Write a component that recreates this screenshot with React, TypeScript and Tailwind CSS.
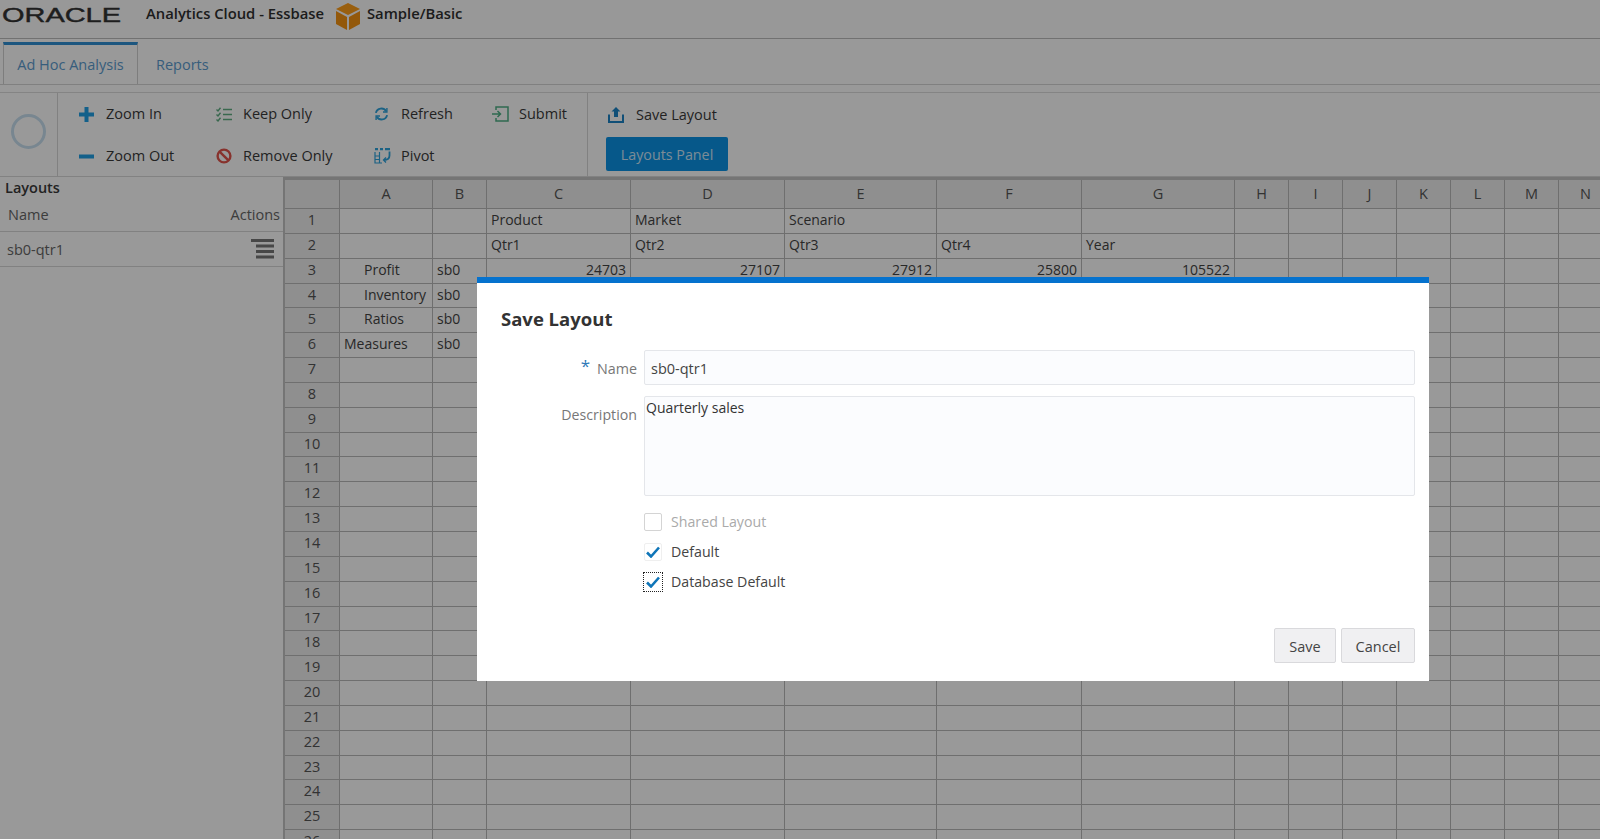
import React from "react";

const F = { fontFamily: '"Open Sans", "Noto Sans", sans-serif' };
const cols = ["A", "B", "C", "D", "E", "F", "G", "H", "I", "J", "K", "L", "M", "N"];
const rows: Record<number, string[]> = {
  1: ["", "", "Product", "Market", "Scenario"],
  2: ["", "", "Qtr1", "Qtr2", "Qtr3", "Qtr4", "Year"],
  3: ["Profit", "sb0", "24703", "27107", "27912", "25800", "105522"],
  4: ["Inventory", "sb0"],
  5: ["Ratios", "sb0"],
  6: ["Measures", "sb0"],
};

function Cube() {
  return (
    <svg width="26" height="27" viewBox="0 0 26 27">
      <polygon points="13,0 25,6 13,12 1,6" fill="#ff9e1a" />
      <polygon points="1,8 12,14 12,27 1,21" fill="#f59312" />
      <polygon points="25,8 14,14 14,27 25,21" fill="#f59312" />
    </svg>
  );
}

function Plus() {
  return (
    <svg width="15" height="15" viewBox="0 0 15 15"><path d="M5.500 0h4v5.500H15v4H9.500V15h-4V9.500H0v-4h5.500z" fill="#21a0e6" /></svg>
  );
}
function Minus() {
  return (
    <svg width="15" height="15" viewBox="0 0 15 15"><rect y="5.500" width="15" height="4" fill="#21a0e6" /></svg>
  );
}
function KeepOnly() {
  return (
    <svg width="16" height="15" viewBox="0 0 16 15" fill="none" stroke="#5fae83" strokeWidth="1.400">
      <path d="M7 2.500h9M7 7.500h9M7 12.500h9" />
      <path d="M.5 2.500l1.500 1.500L4.500.8M.5 7.500L2 9l2.500-3.200M.5 12.500L2 14l2.500-3.200" />
    </svg>
  );
}
function RemoveOnly() {
  return (
    <svg width="16" height="16" viewBox="0 0 16 16" fill="none" stroke="#e2544b" strokeWidth="2.400">
      <circle cx="8" cy="8" r="6.400" />
      <path d="M3.600 3.600l8.800 8.800" />
    </svg>
  );
}
function Refresh() {
  return (
    <svg width="15" height="14" viewBox="0 0 16 15" fill="none" stroke="#2ea3dd" strokeWidth="2">
      <path d="M2 6.300A6 6 0 0 1 13 4.600" />
      <path d="M14 8.700A6 6 0 0 1 3 10.400" />
      <path d="M13.800 1v4.400H9.600M2.200 14V9.600h4.200" strokeWidth="1.500" />
    </svg>
  );
}
function Pivot() {
  return (
    <svg width="17" height="16" viewBox="0 0 17 16" fill="none" stroke="#2ea3dd">
      <path d="M1 1h3M6 1h3M11 1h5" strokeWidth="2.400" />
      <path d="M1 4v11h7M1 8h5M1 11.500h5M5.500 4v11" strokeWidth="1.200" />
      <path d="M15.500 3.500v4c0 3-2 4.500-5.500 4.500" strokeWidth="1.800" />
      <path d="M12 9.500L9.500 12l2.500 2.500" strokeWidth="1.300" />
    </svg>
  );
}
function Submit() {
  return (
    <svg width="17" height="16" viewBox="0 0 17 16" fill="none" stroke="#4fb186" strokeWidth="1.500">
      <path d="M4 4V1h12v14H4v-3" />
      <path d="M0 8h8M5.500 5L8.500 8l-3 3" />
    </svg>
  );
}
function SaveIcon() {
  return (
    <svg width="16" height="16" viewBox="0 0 16 16"><path d="M8 0l4.500 4.500H10V10H6V4.500H3.500z" fill="#1b84c7" /><path d="M1 7.500v7.500h14V7.500" fill="none" stroke="#1b84c7" strokeWidth="2" /></svg>
  );
}
function Menu() {
  return (
    <svg width="23" height="20" viewBox="0 0 23 20" fill="#777">
      <rect y="0" width="23" height="3" />
      <rect x="5" y="5.500" width="18" height="3" />
      <rect x="5" y="11" width="18" height="3" />
      <rect x="5" y="16.500" width="18" height="3" />
    </svg>
  );
}
function Check() {
  return (
    <svg width="14" height="12" viewBox="0 0 14 12" fill="none" stroke="#0f75b8" strokeWidth="2.600">
      <path d="M1 6.500l4 4L13 1.500" />
    </svg>
  );
}

function Tool({ icon, label, w }: { icon: React.ReactNode; label: string; w: string }) {
  return (
    <div className={`flex items-center h-[20px] ${w}`}>
      <div className="w-[27px] flex items-center">{icon}</div>
      <span className="text-[14.500px] text-[#3a3a3a] whitespace-nowrap">{label}</span>
    </div>
  );
}

function Cell({ c, r, v }: { c: number; r: number; v: string }) {
  const num = r === 3 && c >= 2;
  const indent = c === 0 && v !== "Measures" ? "pl-[24px]" : "pl-[4px]";
  return (
    <div
      className={`border-r border-b border-[#b9b9b9] h-[24.850px] leading-[22px] text-[14px] text-[#444] whitespace-nowrap overflow-hidden ${num ? "text-right pr-[4px]" : indent}`}
    >
      {v}
    </div>
  );
}

export default function App() {
  const rowNums = Array.from({ length: 26 }, (_, i) => i + 1);
  return (
    <div style={F} className="relative w-[1600px] h-[839px] overflow-hidden bg-white">
      <header className="h-[39px] border-b border-[#bdbdbd] bg-[#fdfdfd] flex items-start pl-[2px]">
        <svg width="120" height="24" viewBox="0 0 120 24" className="mt-[3px]">
          <text x="0" y="19" fontSize="20" textLength="119" lengthAdjust="spacingAndGlyphs" fontFamily='"Liberation Sans", sans-serif' fill="#333" stroke="#333" strokeWidth="0.400">ORACLE</text>
        </svg>
        <span className="ml-[24px] mt-[2px] text-[14.800px] font-semibold text-[#303030] whitespace-nowrap">Analytics Cloud - Essbase</span>
        <div className="ml-[11px] mt-[3px]"><Cube /></div>
        <span className="ml-[6px] mt-[2px] text-[14.800px] font-semibold text-[#303030] whitespace-nowrap">Sample/Basic</span>
      </header>

      <nav className="h-[46px] border-b border-[#d6d6d6] flex items-end pl-[3px]">
        <div className="w-[135px] h-[42px] border-t-[3px] border-[#2f8fd4] border-x border-x-[#d0d0d0] flex items-center justify-center text-[14.500px] text-[#5c9ccf]">Ad Hoc Analysis</div>
        <div className="ml-[18px] h-[42px] border-t-[3px] border-transparent flex items-center text-[14.500px] text-[#5c9ccf]">Reports</div>
      </nav>

      <div className="h-[92px] pt-[7px] border-b border-[#d9d9d9]">
        <div className="h-[85px] border-t border-[#dcdcdc] flex">
          <div className="w-[58px] border-r border-[#d8d8d8] flex items-center justify-center">
            <div className="w-[35px] h-[35px] rounded-full border-[3px] border-[#c8e0f0] mt-[-8px]"></div>
          </div>
          <div className="w-[530px] border-r border-[#d8d8d8] pl-[21px] pt-[11px] flex flex-col gap-[22px]">
            <div className="flex">
              <Tool w="w-[137px]" icon={<Plus />} label="Zoom In" />
              <Tool w="w-[158px]" icon={<KeepOnly />} label="Keep Only" />
              <Tool w="w-[118px]" icon={<Refresh />} label="Refresh" />
              <Tool w="w-[90px]" icon={<Submit />} label="Submit" />
            </div>
            <div className="flex">
              <Tool w="w-[137px]" icon={<Minus />} label="Zoom Out" />
              <Tool w="w-[158px]" icon={<RemoveOnly />} label="Remove Only" />
              <Tool w="w-[118px]" icon={<Pivot />} label="Pivot" />
            </div>
          </div>
          <div className="pl-[18px] pt-[12px]">
            <div className="flex items-center h-[20px] pl-[2px]">
              <div className="w-[28px]"><SaveIcon /></div>
              <span className="text-[14.500px] text-[#3a3a3a]">Save Layout</span>
            </div>
            <button className="mt-[12px] w-[122px] h-[34px] pt-[1px] rounded-[2px] bg-[#0a93e6] text-[14.300px] text-[#cfe8fa]">Layouts Panel</button>
          </div>
        </div>
      </div>

      <div className="flex">
        <aside className="w-[283px] shrink-0">
          <div className="h-[21px] pl-[5px] text-[14.500px] font-semibold leading-[21px] text-[#3a3a3a]">Layouts</div>
          <div className="h-[34px] pl-[8px] pr-[3px] pt-[1px] border-b border-[#d8d8d8] flex items-center justify-between text-[14.500px] text-[#666]">
            <span>Name</span><span>Actions</span>
          </div>
          <div className="h-[35px] pl-[7px] pr-[9px] border-b border-[#d8d8d8] flex items-center justify-between text-[14.500px] text-[#666]">
            <span className="mt-[2px]">sb0-qtr1</span><Menu />
          </div>
        </aside>
        <div className="border-l-2 border-t-[3px] border-[#c4c4c4] grid grid-cols-[55px_93px_54px_144px_154px_152px_145px_153px_54px_54px_54px_54px_54px_54px_54px] content-start">
          <div className="h-[29px] bg-[#eeeeee] border-r border-b border-[#b9b9b9]"></div>
          {cols.map((c) => (
            <div key={c} className="h-[29px] bg-[#eeeeee] border-r border-b border-[#b9b9b9] text-center leading-[27px] text-[14.500px] text-[#555]">{c}</div>
          ))}
          {rowNums.map((r) => (
            <React.Fragment key={r}>
              <div className="h-[24.850px] bg-[#eeeeee] border-r border-b border-[#b9b9b9] text-center leading-[22px] text-[14.500px] text-[#555]">{r}</div>
              {cols.map((_, c) => (
                <Cell key={c} c={c} r={r} v={rows[r]?.[c] ?? ""} />
              ))}
            </React.Fragment>
          ))}
        </div>
      </div>

      <div className="fixed inset-0 bg-black/40">
        <div className="absolute left-[477px] top-[277px] w-[952px] h-[404px] bg-white border-t-[6px] border-[#0572ce] px-[24px] pt-[22px]">
          <h2 className="text-[18.500px] font-bold leading-[27px] text-[#333]">Save Layout</h2>
          <div className="mt-[18px] w-[914px] flex items-center h-[35px]">
            <label className="w-[143px] pr-[7px] pt-[2px] text-right text-[14.300px] text-[#777]">
              <span className="text-[#2f7ab8] text-[17px] leading-none mr-[7px] align-[2px]">*</span>Name
            </label>
            <input readOnly value="sb0-qtr1" className="w-[771px] h-[35px] pl-[6px] pt-[2px] bg-[#fbfcfe] border border-[#e4e6ea] rounded-[2px] text-[14.500px] text-[#444] outline-none" />
          </div>
          <div className="mt-[11px] flex items-start w-[914px]">
            <label className="w-[143px] pr-[7px] text-right pt-[8px] text-[14.200px] text-[#777]">Description</label>
            <textarea readOnly value="Quarterly sales" className="w-[771px] h-[100px] px-[1px] bg-[#fbfcfe] border border-[#e4e6ea] rounded-[2px] text-[14px] text-[#333] outline-none resize-none" />
          </div>
          <div className="mt-[17px] ml-[143px] flex flex-col gap-[13px]">
            <div className="flex items-center h-[17px]">
              <span className="w-[18px] h-[18px] border border-[#d4d4d4] rounded-[2px]"></span>
              <span className="ml-[9px] text-[14.200px] text-[#aaaaaa]">Shared Layout</span>
            </div>
            <div className="flex items-center h-[17px]">
              <span className="w-[18px] h-[18px] border border-[#efefef] rounded-[2px] flex items-center justify-center"><Check /></span>
              <span className="ml-[9px] text-[14.200px] text-[#444]">Default</span>
            </div>
            <div className="flex items-center h-[17px]">
              <span className="w-[20px] h-[20px] ml-[-1px] mr-[-1px] border border-dotted border-[#222] flex items-center justify-center"><Check /></span>
              <span className="ml-[9px] text-[14.200px] text-[#444]">Database Default</span>
            </div>
          </div>
          <div className="absolute right-[14px] bottom-[18px] flex gap-[5px]">
            <button className="w-[62px] h-[35px] pt-[2px] bg-[#f0f0f2] border border-[#d9d9dc] rounded-[2px] text-[14.500px] text-[#444]">Save</button>
            <button className="w-[74px] h-[35px] pt-[2px] bg-[#f0f0f2] border border-[#d9d9dc] rounded-[2px] text-[14.500px] text-[#444]">Cancel</button>
          </div>
        </div>
      </div>
    </div>
  );
}
